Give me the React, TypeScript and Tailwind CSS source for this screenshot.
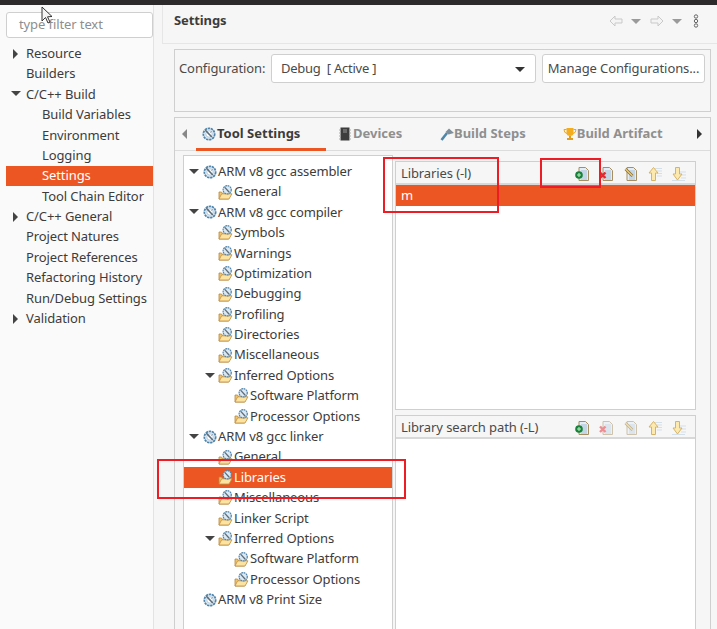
import React from "react";

const ORANGE = "bg-[#ec5622]";

function Arrow({ dir, className = "" }: { dir: "right" | "down" | "left"; className?: string }) {
  const pts = dir === "right" ? "2,0 7,5 2,10" : dir === "left" ? "7,0 2,5 7,10" : "0,2 10,2 5,7";
  return (
    <svg width="10" height="10" viewBox="0 0 10 10" className={className}>
      <polygon points={pts} fill="currentColor" />
    </svg>
  );
}

function ToolIcon() {
  return (
    <svg width="14" height="14" viewBox="0 0 14 14" className="shrink-0">
      <circle cx="7" cy="7" r="5.7" fill="#dce9f3" stroke="#4f84ab" strokeWidth="1.7" strokeDasharray="2.4 0.7" />
      <circle cx="7" cy="7" r="3.2" fill="#fff" stroke="#a7c2d6" strokeWidth="0.8" />
      <path d="M3.4 3.2 L9.8 10" stroke="#5c6b78" strokeWidth="1.6" />
      <path d="M10 3.8 L8.2 5.8" stroke="#9aa8b3" strokeWidth="1" />
    </svg>
  );
}

function FolderIcon() {
  return (
    <svg width="15" height="15" viewBox="0 0 15 15" className="shrink-0">
      <path d="M1 7 L1 14 L10.5 14 L13 9 L5 9 L3.5 7 Z" fill="#f1c66f" stroke="#b8863b" strokeWidth="0.8" />
      <path d="M1 14 L3.6 8.8 L14 8.8 L11 14 Z" fill="#fde3a0" stroke="#bf8e42" strokeWidth="0.8" />
      <circle cx="9.2" cy="4.8" r="4.1" fill="#dce9f3" stroke="#4f84ab" strokeWidth="1.2" strokeDasharray="1.8 0.6" />
      <path d="M6.8 2.4 L11.2 7.2" stroke="#5c6b78" strokeWidth="1.3" />
    </svg>
  );
}

function PageBase({ children, faded }: { children: React.ReactNode; faded?: boolean }) {
  return (
    <svg width="16" height="16" viewBox="0 0 16 16" className={`shrink-0 ${faded ? "opacity-50" : ""}`}>
      <path d="M4 1.5 H10.5 L13.5 4.5 V14.5 H4 Z" fill="#e4edf5" stroke="#a58f62" strokeWidth="1" />
      <path d="M6 5 H12 M6 7 H12 M6 9 H12 M6 11 H12 M6 13 H12" stroke="#9db9d1" strokeWidth="0.9" />
      {children}
    </svg>
  );
}

const AddIcon = () => (
  <PageBase>
    <circle cx="4" cy="9" r="3.8" fill="#17803a" />
    <path d="M2 9 H6 M4 7 V11" stroke="#b7ecb9" strokeWidth="1.1" />
  </PageBase>
);
const DeleteIcon = ({ faded }: { faded?: boolean }) => (
  <PageBase faded={faded}>
    <path d="M1 6.5 L6.5 12 M6.5 6.5 L1 12" stroke="#dd2b34" strokeWidth="2.4" />
  </PageBase>
);
const EditIcon = ({ faded }: { faded?: boolean }) => (
  <PageBase faded={faded}>
    <path d="M2.5 3 L9.5 10" stroke="#8a6a2c" strokeWidth="2.6" />
    <path d="M2.5 3 L9.5 10" stroke="#f1d27d" strokeWidth="1.1" />
  </PageBase>
);
const UpIcon = () => (
  <svg width="16" height="16" viewBox="0 0 16 16" className="shrink-0">
    <path d="M8 2.5 H15 M10 5 H15 M10 7.5 H15 M10 10 H15" stroke="#d3dfe9" strokeWidth="1" />
    <path d="M6.5 1.5 L11 7 H8.5 V14.5 H4.5 V7 H2 Z" fill="#fce9b0" stroke="#d6b36a" strokeWidth="1" />
  </svg>
);
const DownIcon = () => (
  <svg width="16" height="16" viewBox="0 0 16 16" className="shrink-0">
    <path d="M1 14.5 H14 M9 6 H15 M9 9 H15 M10 12 H15" stroke="#d3dfe9" strokeWidth="1" />
    <path d="M4.5 1.5 H8.5 V8 H11 L6.5 14 L2 8 H4.5 Z" fill="#fce9b0" stroke="#d6b36a" strokeWidth="1" />
  </svg>
);

const leftTree: [string, number, "right" | "down" | null, boolean?][] = [
  ["Resource", 0, "right"],
  ["Builders", 0, null],
  ["C/C++ Build", 0, "down"],
  ["Build Variables", 1, null],
  ["Environment", 1, null],
  ["Logging", 1, null],
  ["Settings", 1, null, true],
  ["Tool Chain Editor", 1, null],
  ["C/C++ General", 0, "right"],
  ["Project Natures", 0, null],
  ["Project References", 0, null],
  ["Refactoring History", 0, null],
  ["Run/Debug Settings", 0, null],
  ["Validation", 0, "right"],
];

type ToolRow = { label: string; depth: number; open?: boolean; tool?: boolean; selected?: boolean };
const toolTree: ToolRow[] = [
  { label: "ARM v8 gcc assembler", depth: 0, open: true, tool: true },
  { label: "General", depth: 1 },
  { label: "ARM v8 gcc compiler", depth: 0, open: true, tool: true },
  { label: "Symbols", depth: 1 },
  { label: "Warnings", depth: 1 },
  { label: "Optimization", depth: 1 },
  { label: "Debugging", depth: 1 },
  { label: "Profiling", depth: 1 },
  { label: "Directories", depth: 1 },
  { label: "Miscellaneous", depth: 1 },
  { label: "Inferred Options", depth: 1, open: true },
  { label: "Software Platform", depth: 2 },
  { label: "Processor Options", depth: 2 },
  { label: "ARM v8 gcc linker", depth: 0, open: true, tool: true },
  { label: "General", depth: 1 },
  { label: "Libraries", depth: 1, selected: true },
  { label: "Miscellaneous", depth: 1 },
  { label: "Linker Script", depth: 1 },
  { label: "Inferred Options", depth: 1, open: true },
  { label: "Software Platform", depth: 2 },
  { label: "Processor Options", depth: 2 },
  { label: "ARM v8 Print Size", depth: 0, tool: true },
];

function ListPane({ title, faded, className, children }: { title: string; faded?: boolean; className: string; children?: React.ReactNode }) {
  return (
    <div className={`border border-[#cfcfcf] bg-white flex flex-col ${className}`}>
      <div className="h-[23px] shrink-0 bg-[#f6f6f6] border-b-2 border-[#d8d8d8] flex items-center pt-[3px] pl-[5px] pr-[8px]">
        <span className="flex-1 text-[#4a4a4a]">{title}</span>
        <div className="flex gap-[8px] items-center">
          <AddIcon />
          <DeleteIcon faded={faded} />
          <EditIcon faded={faded} />
          <UpIcon />
          <DownIcon />
        </div>
      </div>
      {children}
    </div>
  );
}

export default function App() {
  return (
    <div className="relative w-[717px] h-[629px] overflow-hidden bg-[#f6f6f6] flex flex-col font-['Noto_Sans',sans-serif] text-[13px] tracking-[-0.1px] text-[#3c3c3c]">
      <div className="h-[5px] shrink-0 bg-[#2c2a2a]" />
      <div className="flex flex-1 min-h-0">
        {/* preference tree */}
        <aside className="w-[154px] shrink-0 bg-[#fafafa] border-r border-[#e3e3e3] pt-[7px] pl-[6px]">
          <div className="h-[26px] border border-[#cfcfcf] rounded-[3px] bg-white flex items-center pl-[12px] text-[#8e8e8e]">
            type filter text
          </div>
          <div className="mt-[5.5px]">
            {leftTree.map(([label, depth, arrow, selected]) => (
              <div key={label} className={`h-[20.4px] flex items-center relative ${depth === 1 ? "pl-[36px]" : "pl-[20px]"} ${selected ? `${ORANGE} text-white` : ""}`}>
                {arrow && <Arrow dir={arrow} className="absolute left-[5px] text-[#444]" />}
                {label}
              </div>
            ))}
          </div>
        </aside>

        {/* settings page */}
        <main className="flex-1 min-w-0 flex flex-col pl-[20px]">
          <div className="h-[39px] shrink-0 -ml-[12px] pl-[11px] border-l border-b border-[#e6e6e6] flex items-center justify-between pr-[18px] pb-[6px]">
            <span className="font-bold">Settings</span>
            <div className="flex items-center text-[#9a9a9a]">
              <svg width="14" height="12" viewBox="0 0 14 12"><path d="M1 6 L6 1 V4 H13 V8 H6 V11 Z" fill="#f4f4f4" stroke="#c9c9c9" /></svg>
              <Arrow dir="down" className="ml-[8px] mt-[2px]" />
              <svg width="14" height="12" viewBox="0 0 14 12" className="ml-[9px]"><path d="M13 6 L8 1 V4 H1 V8 H8 V11 Z" fill="#f4f4f4" stroke="#c9c9c9" /></svg>
              <Arrow dir="down" className="ml-[8px] mt-[2px]" />
              <svg width="6" height="14" viewBox="0 0 6 14" className="ml-[11px]">
                <circle cx="3" cy="2.5" r="1.7" fill="none" stroke="#666" />
                <circle cx="3" cy="7" r="1.7" fill="none" stroke="#666" />
                <circle cx="3" cy="11.5" r="1.7" fill="none" stroke="#666" />
              </svg>
            </div>
          </div>

          <div className="mt-[5px] w-[537px] h-[63px] shrink-0 border border-[#cfcfcf] pt-[4px] pl-[4px] flex items-start">
            <span className="h-[29px] flex items-center w-[92px] text-[#4a4a4a]">Configuration:</span>
            <div className="w-[265px] h-[29px] rounded-[3px] border border-[#cfcfcf] bg-white flex items-center justify-between pl-[9px] pr-[10px] text-[#4a4a4a]">
              <span className="tracking-[-0.25px]">Debug&nbsp; [ Active ]</span>
              <Arrow dir="down" className="text-[#333] mt-[2px]" />
            </div>
            <div className="ml-[6px] w-[163px] h-[29px] rounded-[3px] border border-[#cfcfcf] bg-white flex items-center justify-center text-[#4a4a4a] whitespace-nowrap">
              Manage Configurations...
            </div>
          </div>

          <div className="mt-[5px] w-[537px] flex-1 min-h-0 border border-[#cfcfcf] border-b-0 flex flex-col">
            <div className="h-[33px] shrink-0 border-b border-[#dcdcdc] relative font-bold text-[#8f8f8f] flex items-center tracking-normal">
              <Arrow dir="left" className="absolute left-[5px] text-[#888]" />
              <div className="ml-[21px] w-[130px] h-[33px] border-b-[3px] border-[#ec5622] flex items-center gap-[1px] pl-[6px] pt-[3px] text-[#3c3c3c]">
                <ToolIcon />Tool Settings
              </div>
              <div className="ml-[13px] w-[63px] flex items-center gap-[2px]">
                <svg width="12" height="14" viewBox="0 0 12 14" className="shrink-0">
                  <rect x="1.5" y="0.5" width="9" height="13" fill="#3d3d3d" />
                  <rect x="4" y="2" width="4" height="4" fill="#6a6a6a" />
                  <path d="M0 3 H2 M0 6 H2 M0 9 H2 M0 12 H2 M10 3 H12 M10 6 H12 M10 9 H12 M10 12 H12" stroke="#aaa" />
                </svg>
                Devices
              </div>
              <div className="ml-[38px] flex items-center">
                <svg width="14" height="14" viewBox="0 0 14 14" className="shrink-0">
                  <path d="M1.5 13 L7 6" stroke="#4f87ab" strokeWidth="2.6" />
                  <path d="M5.5 5 L9 1.5 L14 6 L8.5 7.5 Z" fill="#7f909c" />
                </svg>
                Build Steps
              </div>
              <div className="ml-[37px] flex items-center">
                <svg width="14" height="14" viewBox="0 0 14 14" className="shrink-0">
                  <path d="M3.5 1 H10.5 V6 Q10.5 9 7 9 Q3.5 9 3.5 6 Z" fill="#f4ad1e" />
                  <path d="M3.5 2.5 H1 Q1 6 4 6.5 M10.5 2.5 H13 Q13 6 10 6.5" fill="none" stroke="#eda51c" />
                  <path d="M6 9 H8 V11 H10 V13 H4 V11 H6 Z" fill="#e09c1a" />
                </svg>
                Build Artifact
              </div>
              <Arrow dir="right" className="absolute left-[520px] text-[#333]" />
            </div>

            <div className="flex-1 min-h-0 flex pt-[4px] pl-[8px] tracking-[-0.1px]">
              <div className="w-[210px] shrink-0 border border-[#cfcfcf] border-b-0 bg-white pt-[5.5px]">
                {toolTree.map((r, i) => (
                  <div key={i} className={`h-[20.4px] flex items-center relative ${r.tool ? "pl-[19px]" : r.depth === 1 ? "pl-[34px]" : "pl-[50px]"} ${r.selected ? `${ORANGE} text-white` : ""}`}>
                    {r.open && <Arrow dir="down" className={`absolute text-[#444] ${r.depth === 0 ? "left-[5px]" : "left-[21px]"}`} />}
                    {r.tool ? <ToolIcon /> : <FolderIcon />}
                    <span className="ml-[1px]">{r.label}</span>
                  </div>
                ))}
              </div>
              <div className="ml-[2px] w-[301px] shrink-0 flex flex-col gap-[5px] pt-[6px]">
                <ListPane title="Libraries (-l)" className="h-[249px] shrink-0">
                  <div className={`h-[21px] ${ORANGE} text-white flex items-center pl-[5px]`}>m</div>
                </ListPane>
                <ListPane title="Library search path (-L)" faded className="flex-1 min-h-0 border-b-0" />
              </div>
            </div>
          </div>
        </main>
      </div>

      {/* annotations drawn over the screenshot */}
      <div className="absolute left-[157px] top-[459px] w-[249px] h-[40px] border-2 border-[#ee1c25]" />
      <div className="absolute left-[383px] top-[157px] w-[116px] h-[56px] border-2 border-[#ee1c25]" />
      <div className="absolute left-[540px] top-[158px] w-[61px] h-[30px] border-2 border-[#ee1c25]" />

      {/* mouse cursor */}
      <svg width="12" height="19" viewBox="0 0 12 19" className="absolute left-[41px] top-[6px]">
        <path d="M1 1 V15 L4.5 11.5 L7 17 L9 16 L6.5 10.8 L11 10.5 Z" fill="#f4f4f4" stroke="#333" strokeWidth="1" />
      </svg>
    </div>
  );
}
